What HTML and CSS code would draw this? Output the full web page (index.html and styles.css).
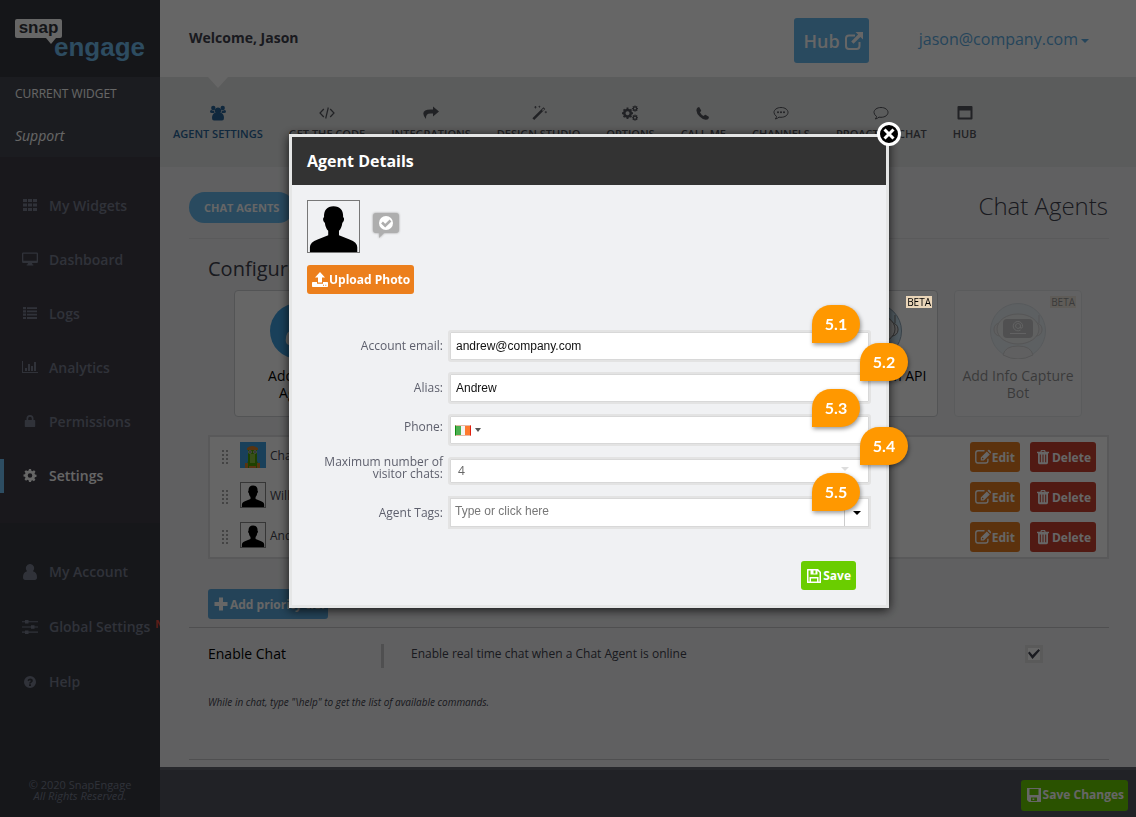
FILE: index.html
```html
<!DOCTYPE html>
<html lang="en">
<head>
<meta charset="utf-8">
<title>SnapEngage - Chat Agents</title>
<link rel="stylesheet" href="styles.css">
</head>
<body>

<!-- icon sprite -->
<svg class="sprite" aria-hidden="true">
  <symbol id="i-grid" viewBox="0 0 16 16"><path d="M1 2h4v3H1zM6 2h4v3H6zM11 2h4v3h-4zM1 6.500h4v3H1zM6 6.500h4v3H6zM11 6.500h4v3h-4zM1 11h4v3H1zM6 11h4v3H6zM11 11h4v3h-4z"/></symbol>
  <symbol id="i-desktop" viewBox="0 0 16 16"><path fill-rule="evenodd" d="M1.200 1.500h13.600q1.200 0 1.200 1.200v8q0 1.200-1.200 1.200H10l.5 1.600h.8v1H4.700v-1h.8l.5-1.600H1.200Q0 11.900 0 10.700v-8q0-1.200 1.200-1.200zM1.300 2.800v6.900h13.400V2.800z"/></symbol>
  <symbol id="i-list" viewBox="0 0 16 16"><path d="M1 2h3v2.200H1zM1 5.300h3v2.200H1zM1 8.600h3v2.200H1zM1 11.900h3v2.200H1zM5 2.200h10v1.800H5zM5 5.500h10v1.800H5zM5 8.800h10v1.800H5zM5 12.100h10v1.800H5z"/></symbol>
  <symbol id="i-chart" viewBox="0 0 16 16"><path d="M0 2h1v11h15v1H0zM3 9h2v3H3zM6 5h2v7H6zM9 7h2v5H9zM12 3h2v9h-2z"/></symbol>
  <symbol id="i-lock" viewBox="0 0 16 16"><path fill-rule="evenodd" d="M4.500 7V5.500a3.500 3.500 0 0 1 7 0V7h1q.7 0 .7.700v5.600q0 .7-.7.700h-9q-.7 0-.7-.700V7.700q0-.7.7-.700zM6.200 7h3.600V5.500a1.800 1.800 0 0 0-3.600 0z"/></symbol>
  <symbol id="i-gear" viewBox="0 0 16 16"><path fill-rule="evenodd" d="M7 2h2l.4 1.700 1.100.5 1.500-.9 1.500 1.500-1 1.500.5 1.100 1.500.3v2.100l-1.600.4-.5 1.100 1 1.500-1.500 1.500-1.500-1-1.100.5L9 15H7l-.4-1.700-1.100-.5-1.500 1-1.500-1.500 1-1.500-.5-1.100L1.500 9.600V7.500L3 7.200l.5-1.100-1-1.500L4 3.200l1.500.9 1.100-.5zM8 6.200a2.300 2.300 0 1 0 0 4.600 2.300 2.300 0 0 0 0-4.600z"/></symbol>
  <symbol id="i-user" viewBox="0 0 16 16"><path d="M8 0a4 4.200 0 0 1 2.900 7.200Q15 8 15 13.300 15 16 12.700 16H3.300Q1 16 1 13.300 1 8 5.100 7.200A4 4.200 0 0 1 8 0z"/></symbol>
  <symbol id="i-sliders" viewBox="0 0 16 16"><path d="M0 2.200h3V1h3.500v1.200H16v1.100H6.500v1.200H3V3.300H0zM0 7.400h9V6.200h3.500v1.200H16v1.100h-3.500v1.200H9V8.500H0zM0 12.600h3v-1.200h3.500v1.200H16v1.100H6.500v1.200H3v-1.200H0z"/></symbol>
  <symbol id="i-help" viewBox="0 0 16 16"><path fill-rule="evenodd" d="M8 2a6 6 0 1 1 0 12A6 6 0 0 1 8 2zM5.400 6.300l1.300.9Q7.200 6.200 8 6.200q.8 0 .8.700 0 .5-.8 1-1 .6-1 1.700h1.900q0-.5.800-1 1.100-.7 1.100-1.800Q10.800 4.400 8.200 4.400q-1.800 0-2.800 1.900zM7 10.300h2v1.800H7z"/></symbol>
  <symbol id="i-users" viewBox="0 0 16 16"><circle cx="3.300" cy="3" r="2.200"/><circle cx="12.700" cy="3" r="2.200"/><path d="M0 6.500Q0 5 1.300 5q2 1 3 .4Q4 7 4.700 8H2Q0 8 0 6.500zM16 6.500Q16 5 14.700 5q-2 1-3 .4Q12 7 11.300 8H14q2 0 2-1.500zM8 2.500a3.200 3.200 0 0 1 2.500 5.300Q14 8.500 14 13q0 2.500-2 2.500H4Q2 15.500 2 13q0-4.500 3.500-5.200A3.200 3.200 0 0 1 8 2.500z"/></symbol>
  <symbol id="i-code" viewBox="0 0 16 16"><path fill="none" stroke="currentColor" stroke-width="1.200" d="M4.800 4L1 8l3.800 4M11.200 4L15 8l-3.800 4M9.300 2.500l-2.600 11"/></symbol>
  <symbol id="i-share" viewBox="0 0 16 16"><path d="M10 1.500L16 6.500l-6 5V8.600H7.500Q2.500 8.600 3 14 .3 11 .3 8.500.500 4.500 7.500 4.500H10z"/></symbol>
  <symbol id="i-magic" viewBox="0 0 16 16"><path fill-rule="evenodd" d="M12.500 2.200l1.700 1.700L3.200 15 1.400 13.200zM11 5l.9.900 1.200-1.500-.7-.8z"/><path d="M4 1h.8v.8h.8v.8h-.8v.8H4v-.8h-.8v-.8H4zM8 .7h.7v.7h.7v.7h-.7v.7H8v-.7h-.7v-.7H8zM14.500 6h.7v.8h.8v.7h-.8v.8h-.7v-.8h-.8v-.7h.8z"/></symbol>
  <symbol id="i-gears" viewBox="0 0 16 16"><path fill="none" stroke="currentColor" stroke-width="2.600" d="M5.500 5a3.300 3.300 0 1 0 .1 0z"/><path fill="none" stroke="currentColor" stroke-width="1.900" d="M5.500 2.500v2M5.500 12v2M0 8.300h2M9 8.300h2M1.600 4.400l1.400 1.400M8 10.800l1.400 1.400M9.400 4.400L8 5.800M3 10.800l-1.400 1.400"/><g fill="none" stroke="currentColor"><circle cx="13" cy="3.600" r="1.700" stroke-width="1.400"/><circle cx="13" cy="12.700" r="1.700" stroke-width="1.400"/><path d="M13 .5v1.500M13 5.200v1.500M9.900 3.600h1M15 3.600h1M10.800 1.400l1 1M14.200 4.800l1 1M15.200 1.400l-1 1M11.800 4.800l-1 1M13 9.600v1M13 14.800v1M9.900 12.700h1M15 12.700h1M10.800 10.500l1 1M14.200 13.900l1 1M15.200 10.500l-1 1M11.800 13.900l-1 1" stroke-width="1.100"/></g></symbol>
  <symbol id="i-phone" viewBox="0 0 16 16"><path d="M4.300 2.200l1.900 3.300q.2.500-1.300 1.700 1.300 2.600 3.900 3.900 1.200-1.600 1.700-1.300l3.300 1.900q.3.300-.2 1.700-1 1.400-3 1.300-3-.2-6-3.200-3-3-3.200-6Q1.400 3.500 2.700 2.500q1.400-.6 1.600-.3z"/></symbol>
  <symbol id="i-comment" viewBox="0 0 16 16"><path fill="none" stroke="currentColor" d="M8 2.500c4 0 7 2.200 7 4.900s-3 4.900-7 4.900q-1 0-2-.2-1.500 1.500-3.700 1.900 1.200-1.200 1.200-2.700Q1 9.800 1 7.400c0-2.700 3-4.900 7-4.900z"/></symbol>
  <symbol id="i-dots" viewBox="0 0 16 16"><use href="#i-comment"/><circle cx="5" cy="7.300" r="1"/><circle cx="8" cy="7.300" r="1"/><circle cx="11" cy="7.300" r="1"/></symbol>
  <symbol id="i-window" viewBox="0 0 16 16"><path fill-rule="evenodd" d="M1.500 1h13q1 0 1 1v11.500q0 1-1 1h-13q-1 0-1-1V2q0-1 1-1zM2.500 5.500v7h11v-7z"/></symbol>
  <symbol id="i-external" viewBox="0 0 18 18"><path fill="none" stroke="currentColor" stroke-width="2" d="M10 3.500H4q-3 0-3 3V14q0 3 3 3h7.500q3 0 3-3v-4"/><path d="M10.500 0H18v7.500l-2.600-2.600-6.900 6.900-2.300-2.300 6.900-6.900z"/></symbol>
  <symbol id="i-edit" viewBox="0 0 16 16"><path fill="none" stroke="currentColor" stroke-width="1.400" d="M9.500 1.700H3Q.8 1.700.8 3.900v7.900Q.8 14 3 14h7.700q2.200 0 2.200-2.200v-2"/><path fill-rule="evenodd" d="M5.800 11.400V8.400l6-6 3 3-6 6zM7 9.200v1h1.200l.5-.5-1.200-1.200zM12.500 1.700l.7-.7q.6-.5 1.200 0L16 2.700q.4.600 0 1.200l-.6.700z"/></symbol>
  <symbol id="i-trash" viewBox="0 0 16 16"><path fill-rule="evenodd" d="M5.300 2.700L6 1h4l.7 1.700H14V4.200h-1V13.500q0 1.700-1.500 1.700h-7Q3 15.200 3 13.500V4.200H2V2.700zM6.600 2.700h2.800L9.100 2H6.900zM4.800 5.500v7.800h1V5.500zM7.500 5.500v7.800h1V5.500zM10.200 5.500v7.800h1V5.500z"/></symbol>
  <symbol id="i-save" viewBox="0 0 16 16"><path fill-rule="evenodd" d="M1.500 1H12l3 3v10.500q0 .5-.5.500h-13q-.5 0-.5-.500v-13Q1 1 1.500 1zM2.500 2.500v11H3.500V9h9v4.500h1V4.700l-2-2V6.500h-7v-4zM7.500 2.500v3h2v-3zM5 10.500v3h6v-3z"/></symbol>
  <symbol id="i-floppy" viewBox="0 0 16 16"><path fill-rule="evenodd" d="M1 1h14v14H3l-2-2zM3.500 2v6h9V2zM5 10.500V14h6v-3.500zM6.500 11.500h1.800V13H6.500z"/></symbol>
  <symbol id="i-upload" viewBox="0 0 16 16"><path d="M8 0l5 5.500H10V10.500H6V5.500H3z"/><path fill-rule="evenodd" d="M.8 10H5v1.700h6V10h4.200q.8 0 .8.800v3.400q0 .8-.8.800H.8q-.8 0-.8-.8v-3.400Q0 10 .8 10zM11 12.800v1h1v-1zM13.300 12.800v1h1v-1z"/></symbol>
  <symbol id="i-plus" viewBox="0 0 16 16"><path d="M6 1.500h4V6h4.500v4H10v4.500H6V10H1.500V6H6z"/></symbol>
  <symbol id="i-person" viewBox="0 0 53 53"><path d="M26.500 5.500c7 0 10.500 4.500 10 11.500 1.700.5 1 5-.8 5.500-.5 4-1.700 6.500-3.500 8.500v4.500l11 4.500q8 3 8 8V53H2v-5q0-5 8-8l11-4.500V31c-1.800-2-3-4.500-3.500-8.500-1.800-.5-2.500-5-.8-5.500-.5-7 3-11.500 9.800-11.500z"/></symbol>
  <symbol id="i-robot" viewBox="0 0 56 56"><circle cx="28" cy="28" r="27.500" fill="#c9e3f2" stroke="#8ba2b4"/><path d="M13 52q2-9 15-9t15 9q-15 8-30 0z" fill="#e9e9e9" stroke="#777"/><rect x="4" y="20" width="48" height="13" rx="6" fill="#ddd" stroke="#777"/><ellipse cx="28" cy="26" rx="21" ry="15" fill="#eee" stroke="#777"/><rect x="13" y="16" width="30" height="19" rx="4" fill="#444"/><path d="M20 30.500h16" stroke="#fff"/><path d="M30.500 23.500a2.500 2.500 0 1 1-.1-1.500v3q1.700 1 2.200-1.500a4.700 4.700 0 1 0-2 3.500" stroke="#fff" fill="none"/><path d="M49 20v-8" stroke="#777"/></symbol>
</svg>

<div class="app">
  <aside class="sidebar">
    <a class="logo" href="#"><span class="logo-snap">snap</span><span class="logo-engage">engage</span></a>
    <div class="widget">
      <p class="widget-label">CURRENT WIDGET</p>
      <p class="widget-name">Support</p>
    </div>
    <nav class="menu">
      <a href="#"><svg><use href="#i-grid"/></svg>My Widgets</a>
      <a href="#"><svg><use href="#i-desktop"/></svg>Dashboard</a>
      <a href="#"><svg><use href="#i-list"/></svg>Logs</a>
      <a href="#"><svg><use href="#i-chart"/></svg>Analytics</a>
      <a href="#"><svg><use href="#i-lock"/></svg>Permissions</a>
      <a href="#" class="current"><svg><use href="#i-gear"/></svg>Settings</a>
    </nav>
    <nav class="menu menu-account">
      <a href="#"><svg><use href="#i-user"/></svg>My Account</a>
      <a href="#"><svg><use href="#i-sliders"/></svg>Global Settings<sup>NEW</sup></a>
      <a href="#"><svg><use href="#i-help"/></svg>Help</a>
    </nav>
    <p class="copyright">© 2020 SnapEngage<br><em>All Rights Reserved.</em></p>
  </aside>

  <div class="main">
    <header class="topbar">
      <p class="welcome">Welcome, Jason</p>
      <a class="hub" href="#">Hub <svg><use href="#i-external"/></svg></a>
      <a class="account" href="#">jason@company.com<i class="caret"></i></a>
    </header>

    <nav class="tabs">
      <a href="#" class="current"><svg><use href="#i-users"/></svg>AGENT SETTINGS</a>
      <a href="#"><svg><use href="#i-code"/></svg>GET THE CODE</a>
      <a href="#"><svg><use href="#i-share"/></svg>INTEGRATIONS</a>
      <a href="#"><svg><use href="#i-magic"/></svg>DESIGN STUDIO</a>
      <a href="#"><svg><use href="#i-gears"/></svg>OPTIONS</a>
      <a href="#"><svg><use href="#i-phone"/></svg>CALL ME</a>
      <a href="#"><svg><use href="#i-dots"/></svg>CHANNELS</a>
      <a href="#"><svg><use href="#i-comment"/></svg>PROACTIVE CHAT</a>
      <a href="#"><svg><use href="#i-window"/></svg>HUB</a>
    </nav>

    <main class="content">
      <div class="page-head">
        <a class="pill" href="#">CHAT AGENTS</a>
        <h1>Chat Agents</h1>
      </div>

      <section class="agents">
        <h2>Configure Chat Agents</h2>
        <div class="cards">
          <a class="card" href="#">
            <span class="card-icon"><svg><use href="#i-user"/></svg></span>
            Add Chat<br>Agent
          </a>
          <a class="card card-api" href="#">
            <span class="beta">BETA</span>
            <svg class="robot"><use href="#i-robot"/></svg>
            Add Custom API
          </a>
          <a class="card disabled" href="#">
            <span class="beta">BETA</span>
            <svg class="robot"><use href="#i-robot"/></svg>
            Add Info Capture Bot
          </a>
        </div>

        <ul class="list">
          <li>
            <i class="grip"></i>
            <svg class="face" viewBox="0 0 26 26"><path fill="#3fa0e0" d="M0 0h26v26H0z"/><path fill="#4ca300" d="M8 7h9v12l3 7H6l2-7z"/><path fill="#8cc63f" d="M10 12h5v9h-5z"/><path fill="#d9822b" d="M7 6q5-4 11 0v2H7zM5 21h3v5H5zM17 21h3v5h-3zM9 24h7v2H9z"/><circle cx="10" cy="10" r="1.800" fill="#ccc"/><circle cx="15" cy="10" r="1.800" fill="#ccc"/><circle cx="10" cy="10" r=".8"/><circle cx="15" cy="10" r=".8"/></svg>
            <span class="name">Charlie</span>
            <button class="btn edit"><svg><use href="#i-edit"/></svg>Edit</button>
            <button class="btn delete"><svg><use href="#i-trash"/></svg>Delete</button>
          </li>
          <li>
            <i class="grip"></i>
            <svg class="face framed"><use href="#i-person"/></svg>
            <span class="name">William</span>
            <button class="btn edit"><svg><use href="#i-edit"/></svg>Edit</button>
            <button class="btn delete"><svg><use href="#i-trash"/></svg>Delete</button>
          </li>
          <li>
            <i class="grip"></i>
            <svg class="face framed"><use href="#i-person"/></svg>
            <span class="name">Andrew</span>
            <button class="btn edit"><svg><use href="#i-edit"/></svg>Edit</button>
            <button class="btn delete"><svg><use href="#i-trash"/></svg>Delete</button>
          </li>
        </ul>
        <button class="btn add"><svg><use href="#i-plus"/></svg>Add priority tier</button>
      </section>

      <section class="option">
        <div class="option-row">
          <h3>Enable Chat</h3>
          <label for="enable-chat">Enable real time chat when a Chat Agent is online</label>
          <input type="checkbox" id="enable-chat" checked>
        </div>
        <p class="hint">While in chat, type "\help" to get the list of available commands.</p>
      </section>
    </main>

    <footer class="savebar">
      <button class="btn save-all"><svg><use href="#i-floppy"/></svg>Save Changes</button>
    </footer>
  </div>
</div>

<div class="overlay">
  <div class="modal" role="dialog" aria-labelledby="modal-title">
    <h2 class="modal-title" id="modal-title">Agent Details</h2>
    <button class="close" aria-label="Close"><svg viewBox="0 0 12 12"><path d="M1.500 1.500l9 9M10.500 1.500l-9 9"/></svg></button>
    <form class="modal-body">
      <div class="photo">
        <svg class="avatar"><use href="#i-person"/></svg>
        <svg class="status" viewBox="0 0 28 26"><path d="M4 0h20q3 0 3 3v14q0 3-3 3H12l-5 5 .5-5H4q-3 0-3-3V3q0-3 3-3z" fill="#aeaeae"/><circle cx="14" cy="10" r="7" fill="#fff"/><path d="M10 9.500l3.200 3.200L18.500 7.500" fill="none" stroke="#aeaeae" stroke-width="2.600"/></svg>
      </div>
      <button type="button" class="btn upload"><svg><use href="#i-upload"/></svg>Upload Photo</button>

      <div class="fields">
        <label for="email">Account email:</label>
        <div class="field"><input type="email" id="email" value="andrew@company.com"></div>
        <label for="alias">Alias:</label>
        <div class="field"><input type="text" id="alias" value="Andrew"></div>
        <label for="phone" class="raised">Phone:</label>
        <div class="field">
          <button type="button" class="country" aria-label="Ireland"><i class="flag"></i><i class="caret"></i></button>
          <input type="tel" id="phone">
        </div>
        <label for="max" class="raised">Maximum number of visitor chats:</label>
        <div class="field short">
          <select id="max"><option>4</option></select>
          <i class="caret"></i>
        </div>
        <label for="tags">Agent Tags:</label>
        <div class="field square">
          <input type="text" id="tags" placeholder="Type or click here">
          <button type="button" class="drop" aria-label="Show tags"><i class="caret"></i></button>
        </div>
      </div>
      <button type="button" class="btn save"><svg><use href="#i-save"/></svg>Save</button>
    </form>
    <span class="step step-1">5.1</span>
    <span class="step step-2">5.2</span>
    <span class="step step-3">5.3</span>
    <span class="step step-4">5.4</span>
    <span class="step step-5">5.5</span>
  </div>
</div>

</body>
</html>
```
FILE: styles.css
```css
*{box-sizing:border-box;}
body{margin:0;font-family:"Open Sans",sans-serif;font-size:12px;color:#3f424e;background:#f0f1f3;}
h1,h2,h3,p,ul{margin:0;padding:0;}
a{color:inherit;text-decoration:none;}
svg{width:16px;height:16px;fill:currentColor;flex:none;}
button,input,select{font:inherit;margin:0;}
.sprite{display:none;}
.caret{display:inline-block;border:4px solid transparent;border-top-color:currentColor;border-bottom:0;}

.app{display:flex;min-height:100vh;}

/* sidebar */
.sidebar{width:160px;flex:none;display:flex;flex-direction:column;background:#373a42;overflow:hidden;}
.logo{display:flex;flex-direction:column;height:77px;padding:19px 15px 0;font-family:"Liberation Sans",sans-serif;font-weight:bold;background:#35373f;}
.logo-snap{position:relative;width:47px;height:19px;border-radius:2px;background:#fff;color:#35373f;font-size:17px;line-height:17px;text-align:center;}
.logo-snap:after{content:"";position:absolute;left:31px;top:19px;border:5px solid transparent;border-top:6px solid #fff;border-bottom:0;}
.logo-engage{align-self:flex-end;font-size:26px;line-height:18px;color:#70bdf0;}
.widget{height:80px;padding:8px 15px;background:#444750;color:#fff;}
.widget-label{line-height:17px;}
.widget-name{padding-top:24px;font-size:14px;line-height:20px;font-style:italic;}
.menu{padding:21px 0;background:#3f3d47;}
.menu a{display:flex;align-items:center;height:54px;padding-left:22px;font-size:14px;font-weight:600;color:#787e90;white-space:nowrap;position:relative;}
.menu svg{margin-right:11px;}
.menu .current{color:#fff;}
.menu .current:before{content:"";position:absolute;left:0;top:11px;width:4px;height:34px;background:#72c0f5;}
.menu-account{background:none;}
.menu-account a{height:55px;}
.menu sup{margin:-6px 0 0 5px;font-size:10px;font-weight:bold;line-height:10px;color:#e74c3c;}
.copyright{margin-top:auto;padding-bottom:16px;text-align:center;font-size:11px;line-height:11px;color:#787e90;}

/* header */
.main{flex:1;min-width:0;display:flex;flex-direction:column;}
.topbar{display:flex;align-items:center;height:77px;padding:0 47px 0 29px;background:#fff;}
.welcome{font-size:14px;font-weight:bold;line-height:20px;margin-right:auto;padding-bottom:2px;}
.hub{display:flex;align-items:center;gap:5px;height:45px;margin:4px 50px 0 0;padding:0 6px 0 10px;border-radius:3px;background:#66b8ee;color:#fff;font-size:18px;font-weight:600;}
.hub svg{width:18px;height:18px;}
.account{font-size:16px;color:#5cace4;}
.account .caret{margin-left:3px;vertical-align:2px;}

.tabs{display:flex;height:90px;background:#e4e5e5;}
.tabs a{position:relative;display:flex;flex-direction:column;align-items:center;gap:4px;padding:28px 13px 0;font-size:11px;line-height:17px;font-weight:600;color:#53555c;white-space:nowrap;}
.tabs .current{color:#28659a;}
.tabs .current:before{content:"";position:absolute;top:0;left:50%;margin-left:-10px;border:10px solid transparent;border-top:11px solid #fff;border-bottom:0;}

/* content */
.content{padding:0 27px 0 29px;}
.page-head{display:flex;align-items:center;justify-content:space-between;height:72px;padding:9px 1px 0 0;border-bottom:1px solid #e0e1e3;}
.page-head h1{font-size:24px;font-weight:300;line-height:30px;padding-bottom:2px;}
.pill{height:31px;padding:0 15px;border-radius:16px;background:#66b8ee;color:#fff;font-size:11px;font-weight:bold;line-height:31px;}
.agents{padding:15px 0 8px 19px;border-bottom:1px solid #c5c6c8;}
.agents h2{font-size:20px;font-weight:normal;line-height:30px;}
.cards{display:grid;grid-template-columns:repeat(6,128px);gap:16px;margin:6px 0 18px 26px;}
.card{position:relative;height:127px;padding:76px 4px 0;border:1px solid #cfd1d5;border-radius:4px;background:#fff;color:#000;font-size:14px;line-height:17px;text-align:center;}
.card-icon{position:absolute;left:35px;top:12px;width:56px;height:56px;padding:14px;border-radius:50%;background:#3fa0e0;color:#fff;}
.card-icon svg{width:28px;height:28px;}
.card-api{grid-column:5;}
.robot{position:absolute;left:35px;top:12px;width:56px;height:56px;}
.disabled{opacity:.4;}
.disabled .robot{opacity:.6;}
.beta{position:absolute;z-index:1;top:5px;right:5px;padding:0 1px;background:#e9d5b8;font-size:10px;line-height:12px;}
.list{list-style:none;padding:0 10px;border:2px solid #dedfe1;background:#fff;}
.list li{display:flex;align-items:center;height:40px;}
.grip{width:8px;height:16px;margin:2px 12px 0 0;background:conic-gradient(from 90deg at 2px 2px,transparent 270deg,#aaa 0) 0 0/4px 4px;}
.face{width:26px;height:26px;margin:-4px 4px 0 0;}
.framed{border:1px solid #888;color:#000;}
.name{margin-right:auto;padding-bottom:3px;font-size:12px;}

.btn{display:flex;align-items:center;height:30px;padding:0 5px;border:0;border-radius:3px;color:#fff;font-size:12px;font-weight:bold;white-space:nowrap;}
.btn svg{margin-right:1px;}
.edit{margin-right:10px;background:#e67e22;}
.delete{margin-right:1px;background:#ca4230;}
.add{margin-top:30px;padding-right:2px;background:#5ba8dc;}

.option{height:132px;padding:16px 0 0 19px;border-bottom:1px solid #c5c6c8;}
.option-row{display:flex;align-items:flex-start;height:50px;}
.option h3{width:176px;height:24px;margin-right:27px;border-right:3px solid #c5c6c8;color:#000;font-size:14px;font-weight:normal;line-height:20px;}
.option label{margin-right:auto;line-height:20px;}
.option input{appearance:none;width:18px;height:18px;margin:1px 66px 0 0;border:3px solid #e0e0e0;background:#fff url("data:image/svg+xml,%3Csvg xmlns='http://www.w3.org/2000/svg' viewBox='0 0 12 12'%3E%3Cpath d='M0 5l1.500-1.500L4.500 7 10.500 1 12 2.500 4.500 11z' fill='%23444754'/%3E%3C/svg%3E") center/12px 12px;}
.hint{font-size:10px;line-height:16px;font-style:italic;}

.savebar{display:flex;justify-content:flex-end;margin-top:auto;height:50px;padding:10px 8px 0;border-top:3px solid #62646e;background:#535560;}
.save-all{height:31px;padding:0 4px 2px 5px;background:#6acd00;}

/* dialog */
.overlay{position:fixed;inset:0;display:flex;justify-content:center;align-items:flex-start;padding:134px 0 0 42px;background:rgba(0,0,0,.6);}
.modal{position:relative;width:600px;border:3px solid #e5e6e6;background:#f0f1f3;box-shadow:0 2px 10px rgba(0,0,0,.8);}
.modal-title{padding:0 15px;background:#333;color:#fff;font-size:16px;line-height:48px;}
.close{position:absolute;top:-15px;right:-15px;width:24px;height:24px;padding:3px;border:3px solid #fff;border-radius:50%;background:#000;}
.close svg{display:block;width:12px;height:12px;fill:none;stroke:#fff;stroke-width:3;}
.modal-body{padding:15px;display:flex;flex-direction:column;align-items:flex-start;}
.photo{display:flex;align-items:center;gap:12px;}
.avatar{width:53px;height:53px;border:1px solid #777;color:#000;}
.status{width:28px;height:26px;margin-bottom:2px;filter:drop-shadow(0 0 1px #999);}
.upload{height:29px;margin:12px 0 36px;padding-right:4px;background:#ec7f1c;}
.fields{display:grid;grid-template-columns:136px 423px;column-gap:5px;row-gap:10px;align-items:center;}
.fields label{text-align:right;line-height:12px;color:#5d5f6c;}
.fields .raised{padding-bottom:6px;}
.field{display:flex;align-items:center;height:32px;border:2px solid #e3e3e3;border-radius:3px;background:#fff;font-family:"Liberation Sans",sans-serif;box-shadow:inset 0 0 0 1px #d8d8d8;color:#111;}
.field input,.field select{flex:1;min-width:0;height:100%;padding:0 6px;border:0;outline:0;background:none;color:inherit;}
.field input::placeholder{color:#777;}
.short{height:28px;padding-right:20px;color:#666;}
.short select{appearance:none;padding:0 8px 2px;font-family:"Open Sans",sans-serif;}
.short .caret{margin-bottom:4px;color:#ddd;}
.square{height:33px;border-radius:0;}
.square input{padding:0 5px 4px;}
.country{display:flex;align-items:center;gap:4px;padding:0 0 0 5px;border:0;background:none;color:#555;}
.country .caret{border-width:4px 3px 0;}
.flag{width:16px;height:11px;background:linear-gradient(90deg,#4caf50 33%,#f4f4f4 33% 66%,#ff7a2e 66%);border:1px solid;border-color:#e8b9a8 #e02010 #e8b9a8 #118c11;}
.drop{align-self:stretch;width:24px;margin:1px;padding:0;border:0;border-left:1px solid #ccc;background:none;}
.drop .caret{vertical-align:middle;}
.save{align-self:flex-end;height:29px;margin:32px 15px 0 0;background:#6acd00;}
.step{position:absolute;width:48px;height:38px;border-radius:19px 19px 19px 0;background:#ff9800;color:#fff;font:bold 16px/38px Lato,sans-serif;text-align:center;box-shadow:1px 2px 4px rgba(0,0,0,.4);}
.step-1{left:520px;top:168px;}
.step-2{left:568px;top:206px;}
.step-3{left:520px;top:252px;}
.step-4{left:568px;top:290px;}
.step-5{left:520px;top:336px;}
```
